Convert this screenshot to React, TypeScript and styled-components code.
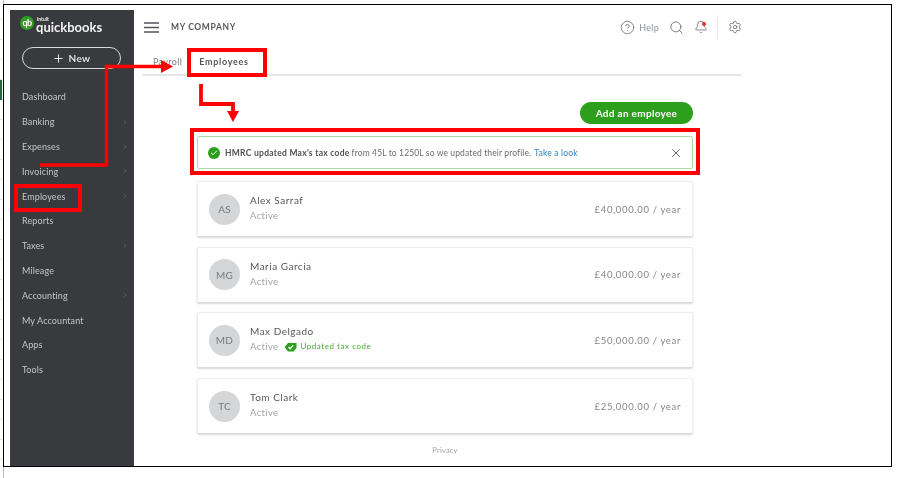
import React from "react";
import styled, { createGlobalStyle } from "styled-components";
import { CircleHelp, Search, Bell, Settings, X, ChevronRight, Plus, Check } from "lucide-react";

const Global = createGlobalStyle`
  html, body { margin: 0; padding: 0; background: #fff; }
  body { font-family: "Lato", "Liberation Sans", sans-serif; }
  #root { width: 902px; height: 478px; overflow: hidden; }
`;

const Page = styled.div`
  position: relative;
  width: 902px;
  height: 478px;
  padding: 4px 0 0 3px;
  box-sizing: border-box;
  background:
    linear-gradient(#1f6b3a, #1f6b3a) 0 80px / 2px 20px no-repeat,
    linear-gradient(#bbb, #bbb) 3px 0 / 1px 100% no-repeat,
    repeating-linear-gradient(#fff 0 19px, #e6e6e6 19px 20px) 0 0 / 3px 100% no-repeat,
    #fff;
`;

const Frame = styled.div`
  width: 889px;
  height: 463px;
  box-sizing: border-box;
  border: 1px solid #000;
  padding: 5px 0 0 6px;
  display: flex;
  background: #fff;
`;

const Sidebar = styled.aside`
  width: 124px;
  flex: none;
  background: #393a3d;
  display: flex;
  flex-direction: column;
  filter: blur(0.5px);
`;

const Logo = styled.div`
  display: flex;
  align-items: center;
  gap: 2px;
  padding: 0 0 0 10px;
  height: 26px;
`;

const LogoMark = styled.div`
  width: 14px;
  height: 14px;
  border-radius: 50%;
  background: #2ca01c;
  color: #fff;
  font: 700 9px/13px "Lato", sans-serif;
  text-align: center;
  letter-spacing: -0.5px;
`;

const LogoWord = styled.div`
  position: relative;
  color: #f2f2f2;
  font: 700 13px/14px "Lato", sans-serif;
  padding-top: 8px;
  &::before {
    content: "intuit";
    position: absolute;
    top: 4px;
    left: 1px;
    font: 700 5px/6px "Lato", sans-serif;
  }
`;

const NewButton = styled.button`
  margin: 11px 0 0 12px;
  width: 99px;
  height: 22px;
  border: 1.5px solid #d8d8d8;
  border-radius: 11px;
  background: transparent;
  color: #dfdfdf;
  font: 700 10px/1 "Lato", sans-serif;
  letter-spacing: 0.4px;
  display: flex;
  align-items: center;
  justify-content: center;
  gap: 3px;
  padding: 0;
`;

const Nav = styled.nav`
  margin-top: 15.6px;
  display: flex;
  flex-direction: column;
`;

const NavItem = styled.div`
  height: 24.8px;
  padding: 0 5px 0 12px;
  display: flex;
  align-items: center;
  justify-content: space-between;
  color: #c4c5c6;
  font-size: 9px;
  letter-spacing: 0.12px;
  svg { color: #77787a; }
`;

const Main = styled.main`
  margin-left: 9px;
  width: 598px;
  display: flex;
  flex-direction: column;
  filter: blur(0.5px);
`;

const TopBar = styled.header`
  height: 34px;
  display: flex;
  align-items: center;
  color: #54565a;
`;

const Hamburger = styled.svg`
  margin-left: 1px;
  flex: none;
`;

const Company = styled.div`
  margin-left: 12px;
  font: 700 8.5px/1 "Lato", sans-serif;
  letter-spacing: 0.65px;
  color: #55575b;
`;

const TopActions = styled.div`
  margin-left: auto;
  margin-right: -1px;
  display: flex;
  align-items: center;
  color: #6b6c72;
`;

const HelpLabel = styled.span`
  font-size: 9px;
  letter-spacing: 0.3px;
  margin: 0 10px 0 4px;
  color: #8d9096;
`;

const BellWrap = styled.span`
  position: relative;
  display: flex;
  margin-left: 10px;
  &::after {
    content: "";
    position: absolute;
    top: 2px;
    right: 2px;
    width: 4px;
    height: 4px;
    border-radius: 50%;
    background: #e0322d;
  }
`;

const Divider = styled.span`
  width: 1px;
  height: 25px;
  background: #eee;
  margin: 0 10px 0 9px;
`;

const Tabs = styled.div`
  margin-top: 5px;
  height: 25px;
  padding-left: 10px;
  border-bottom: 2px solid #e3e5e8;
  display: flex;
  align-items: center;
  gap: 17px;
`;

const Tab = styled.div<{ $active?: boolean }>`
  font-size: 9px;
  letter-spacing: ${(p) => (p.$active ? "0.7px" : "0.35px")};
  font-weight: ${(p) => (p.$active ? 700 : 400)};
  color: ${(p) => (p.$active ? "#55575b" : "#777a80")};
`;

const Content = styled.div`
  margin: 0 0 0 54px;
  width: 496px;
  display: flex;
  flex-direction: column;
`;

const AddRow = styled.div`
  display: flex;
  justify-content: flex-end;
  margin-top: 26px;
`;

const AddButton = styled.button`
  width: 113px;
  height: 22px;
  border: 0;
  border-radius: 11px;
  background: #2ca01c;
  color: #fff;
  font: 700 10px/1 "Lato", sans-serif;
  letter-spacing: 0.3px;
  padding: 0;
`;

const Banner = styled.div`
  margin-top: 12px;
  height: 33px;
  box-sizing: border-box;
  border: 1px solid #a8dca0;
  border-radius: 2px;
  padding: 0 10px;
  display: flex;
  align-items: center;
  color: #6b6c72;
  font-size: 8.5px;
  letter-spacing: 0.12px;
  white-space: nowrap;
  b { color: #4f5156; margin: 0 2px 0 5px; letter-spacing: 0.27px; }
  a { color: #2a86c8; margin-left: 3px; letter-spacing: 0.2px; }
`;

const CheckDot = styled.span`
  width: 12px;
  height: 12px;
  border-radius: 50%;
  background: #2ca01c;
  color: #fff;
  display: flex;
  align-items: center;
  justify-content: center;
`;

const Close = styled.span`
  margin-left: auto;
  display: flex;
  color: #55575b;
  margin-right: -1px;
`;

const List = styled.div`
  margin-top: 12px;
  display: flex;
  flex-direction: column;
  gap: 9.7px;
`;

const Card = styled.div`
  height: 56px;
  box-sizing: border-box;
  border: 1px solid #eceef0;
  border-bottom-color: #d9dbde;
  box-shadow: 0 1px 2px rgba(0, 0, 0, 0.16);
  border-radius: 2px;
  padding: 0 11px;
  display: flex;
  align-items: center;
  background: #fff;
`;

const Avatar = styled.div`
  width: 31px;
  height: 31px;
  border-radius: 50%;
  background: #d5d6d8;
  color: #777a80;
  font-size: 10px;
  letter-spacing: 0.2px;
  display: flex;
  align-items: center;
  justify-content: center;
  flex: none;
`;

const Person = styled.div`
  margin-left: 10px;
  padding-bottom: 2px;
  display: flex;
  flex-direction: column;
  gap: 4px;
`;

const Name = styled.div`
  font-size: 10px;
  line-height: 11px;
  letter-spacing: 0.5px;
  color: #54565a;
`;

const Status = styled.div`
  display: flex;
  align-items: center;
  font-size: 9.5px;
  line-height: 11px;
  letter-spacing: 0.35px;
  color: #a2a4a8;
`;

const Updated = styled.span`
  display: inline-flex;
  align-items: center;
  gap: 3px;
  margin-left: 6px;
  color: #3fae30;
  font-size: 8px;
  letter-spacing: 0.55px;
`;

const Salary = styled.div`
  margin-left: auto;
  font-size: 9.5px;
  letter-spacing: 0.65px;
  color: #85878c;
`;

const Footer = styled.div`
  margin-top: 12px;
  text-align: center;
  font-size: 7.5px;
  letter-spacing: 0.2px;
  color: #a2a4a8;
`;

const RedBox = styled.div<{ $x: number; $y: number; $w: number; $h: number }>`
  position: absolute;
  left: ${(p) => p.$x}px;
  top: ${(p) => p.$y}px;
  width: ${(p) => p.$w}px;
  height: ${(p) => p.$h}px;
  box-sizing: border-box;
  border: 4px solid #f00;
`;

const Arrows = styled.svg`
  position: absolute;
  left: 0;
  top: 0;
  pointer-events: none;
`;

const nav: [string, boolean][] = [
  ["Dashboard", false], ["Banking", true], ["Expenses", true], ["Invoicing", true],
  ["Employees", true], ["Reports", false], ["Taxes", true], ["Mileage", false],
  ["Accounting", true], ["My Accountant", false], ["Apps", false], ["Tools", false],
];

const people = [
  { i: "AS", n: "Alex Sarraf", s: "£40,000.00 / year" },
  { i: "MG", n: "Maria Garcia", s: "£40,000.00 / year" },
  { i: "MD", n: "Max Delgado", s: "£50,000.00 / year", u: true },
  { i: "TC", n: "Tom Clark", s: "£25,000.00 / year" },
];

export default function App() {
  return (
    <Page>
      <Global />
      <Frame>
        <Sidebar>
          <Logo>
            <LogoMark>qb</LogoMark>
            <LogoWord>quickbooks</LogoWord>
          </Logo>
          <NewButton><Plus size={13} strokeWidth={2} />New</NewButton>
          <Nav>
            {nav.map(([label, more]) => (
              <NavItem key={label}>
                {label}
                {more && <ChevronRight size={8} strokeWidth={1.5} />}
              </NavItem>
            ))}
          </Nav>
        </Sidebar>
        <Main>
          <TopBar>
            <Hamburger width="15" height="11" viewBox="0 0 15 11">
              <path d="M0 1H15M0 5.5H15M0 10H15" stroke="#54565a" strokeWidth="1.5" fill="none" />
            </Hamburger>
            <Company>MY COMPANY</Company>
            <TopActions>
              <CircleHelp size={15} strokeWidth={1.3} />
              <HelpLabel>Help</HelpLabel>
              <Search size={15} strokeWidth={1.4} />
              <BellWrap><Bell size={14} strokeWidth={1.4} /></BellWrap>
              <Divider />
              <Settings size={14} strokeWidth={1.4} />
            </TopActions>
          </TopBar>
          <Tabs>
            <Tab>Payroll</Tab>
            <Tab $active>Employees</Tab>
          </Tabs>
          <Content>
            <AddRow><AddButton>Add an employee</AddButton></AddRow>
            <Banner>
              <CheckDot><Check size={8} strokeWidth={3} /></CheckDot>
              <b>HMRC updated Max's tax code</b>
              from 45L to 1250L so we updated their profile.
              <a>Take a look</a>
              <Close><X size={14} strokeWidth={1.5} /></Close>
            </Banner>
            <List>
              {people.map((p) => (
                <Card key={p.i}>
                  <Avatar>{p.i}</Avatar>
                  <Person>
                    <Name>{p.n}</Name>
                    <Status>
                      Active
                      {p.u && (
                        <Updated>
                          <svg width="13" height="10" viewBox="0 0 13 10">
                            <path d="M0.5 5 L4 1 H12.5 V6 L9.5 9.5 H4 Z" fill="#2ca01c" />
                            <path d="M4.5 5 L6.2 6.8 L9.2 3.4" fill="none" stroke="#fff" strokeWidth="1.4" />
                          </svg>
                          Updated tax code
                        </Updated>
                      )}
                    </Status>
                  </Person>
                  <Salary>{p.s}</Salary>
                </Card>
              ))}
            </List>
            <Footer>Privacy</Footer>
          </Content>
        </Main>
      </Frame>
      <RedBox $x={187} $y={48} $w={80} $h={29} />
      <RedBox $x={14} $y={184} $w={68} $h={28} />
      <RedBox $x={190} $y={128} $w={510} $h={47} />
      <Arrows width="902" height="478" viewBox="0 0 902 478">
        <path d="M40 165 H106.5 V66.5 H163" fill="none" stroke="#f00" strokeWidth="3.4" />
        <path d="M161 60 L173 66.5 L161 73 Z" fill="#f00" />
        <path d="M201 84 V104 H233 V112" fill="none" stroke="#f00" strokeWidth="3.8" />
        <path d="M227 111 H239 L233 122 Z" fill="#f00" />
      </Arrows>
    </Page>
  );
}
